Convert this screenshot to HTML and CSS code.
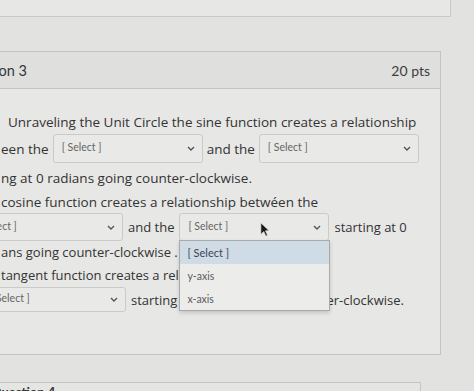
FILE: index.html
```html
<!DOCTYPE html>
<html lang="en">
<head>
<meta charset="utf-8">
<title>Quiz question 3</title>
<link rel="stylesheet" href="styles.css">
</head>
<body>
<div class="page">
  <div class="card card-prev"></div>

  <section class="card card-q3">
    <header class="q-header">
      <span class="q-title">Question 3</span>
      <span class="q-pts">20 pts</span>
    </header>
    <div class="q-body">
      <div class="line l1">Unraveling the Unit Circle the sine function creates a relationship</div>
      <div class="line line-sel l2">
        <span>een the</span>
        <span class="sel sel-a"><span class="sel-text">[ Select ]</span><svg class="chev" viewBox="0 0 8 5"><polyline points="1,1 4,4 7,1"/></svg></span>
        <span>and the</span>
        <span class="sel sel-b"><span class="sel-text">[ Select ]</span><svg class="chev" viewBox="0 0 8 5"><polyline points="1,1 4,4 7,1"/></svg></span>
      </div>
      <div class="line l3">ng at 0 radians going counter-clockwise.</div>
      <div class="line l4">cosine function creates a relationship betwéen the</div>
      <div class="line line-sel lower l5">
        <span class="sel sel-c"><span class="sel-text">[ Select ]</span><svg class="chev" viewBox="0 0 8 5"><polyline points="1,1 4,4 7,1"/></svg></span>
        <span>and the</span>
        <span class="sel sel-d"><span class="sel-text">[ Select ]</span><svg class="chev" viewBox="0 0 8 5"><polyline points="1,1 4,4 7,1"/></svg>
          <ul class="menu">
            <li class="opt opt-active">[ Select ]</li>
            <li class="opt">y-axis</li>
            <li class="opt">x-axis</li>
          </ul>
          <svg class="cursor" viewBox="0 0 12 18"><path d="M1 1 L1 15 L4.5 11.5 L7 17 L9 16 L6.6 10.6 L11 10.6 Z"/></svg>
        </span>
        <span>starting at 0</span>
      </div>
      <div class="line lower l6">ans going counter-clockwise .</div>
      <div class="line lower l7">tangent function creates a relationship between the</div>
      <div class="line line-sel lower l8">
        <span class="sel sel-e"><span class="sel-text">[ Select ]</span><svg class="chev" viewBox="0 0 8 5"><polyline points="1,1 4,4 7,1"/></svg></span>
        <span>starting at 0 radians going counter-clockwise.</span>
      </div>
    </div>
  </section>

  <section class="card card-q4">
    <header class="q-header q4-header">
      <span class="q-title q4-title">Question 4</span>
    </header>
  </section>
</div>
</body>
</html>
```

FILE: styles.css
```css
html, body {
  margin: 0;
  padding: 0;
}
body {
  background: #e2e2e0;
  font-family: "Open Sans", "Liberation Sans", sans-serif;
  color: #333;
  overflow: hidden;
  width: 474px;
  height: 391px;
}
.page {
  display: flex;
  flex-direction: column;
  margin-left: -50px;
}
.card {
  background: #e7e7e5;
  border: 1px solid #c4c4c2;
}
.card-prev {
  width: 501px;
  height: 18px;
  margin-top: -1px;
  box-sizing: border-box;
  border-color: #c9c9c7;
}
.card-q3 {
  margin-top: 34px;
  width: 491px;
  box-sizing: border-box;
}
.q-header {
  height: 37px;
  box-sizing: border-box;
  background: #dfdfdd;
  border-bottom: 1px solid #c4c4c2;
  display: flex;
  align-items: center;
  justify-content: space-between;
  padding: 0 10px 0 5px;
  font-family: Lato, "Open Sans", sans-serif;
  font-size: 14.5px;
  color: #363636;
}
.q-pts {
  color: #3d3d3d;
  font-size: 14px;
}
.q-body {
  padding: 22px 0 42px 50px;
  font-size: 13.5px;
}
.line {
  height: 24px;
  display: flex;
  align-items: center;
  gap: 4px;
  white-space: nowrap;
}
.lower {
  font-size: 13px;
  gap: 5px;
}
.l1 { height: 22px; padding-left: 7px; }
.l2 { height: 29px; margin: 1px 0 2px; }
.l3 { height: 25px; }
.l4 { height: 23px; }
.l5 { height: 28px; }
.l6 { height: 22px; }
.l7 { height: 24px; }
.l8 { height: 25px; }

.sel {
  position: relative;
  height: 100%;
  box-sizing: border-box;
  border: 1px solid #cacac8;
  border-radius: 3px;
  background: #e9e9e7;
  display: flex;
  align-items: center;
  justify-content: space-between;
  padding: 0 7px 3px 8px;
  flex-shrink: 0;
}
.sel-text {
  font-family: Lato, "Open Sans", sans-serif;
  font-size: 10.5px;
  color: #666;
}
.chev {
  width: 8px;
  height: 5px;
  fill: none;
  stroke: #555;
  stroke-width: 1.4;
  margin-top: 3px;
}
.sel-a { width: 150px; }
.sel-b { width: 160px; }
.sel-c { width: 155px; margin-left: -33px; }
.sel-d { width: 150px; }
.sel-e { width: 145px; margin-left: -20px; }

.menu {
  position: absolute;
  top: 100%;
  left: -1px;
  width: 149px;
  margin: 0;
  padding: 0;
  list-style: none;
  background: #ececea;
  border: 1px solid #a9a9a9;
  box-shadow: 0 2px 4px rgba(0, 0, 0, 0.15);
  z-index: 2;
}
.opt {
  height: 23px;
  display: flex;
  align-items: center;
  padding-left: 7px;
  font-family: Lato, "Open Sans", sans-serif;
  font-size: 10.5px;
  color: #5a5a5a;
}
.opt-active {
  background: #cfdbe5;
  color: #3a4652;
  font-size: 11px;
}
.cursor {
  position: absolute;
  left: 80px;
  top: 8px;
  width: 10px;
  height: 15px;
  fill: #1a1a1a;
  stroke: #f0f0f0;
  stroke-width: 0.8;
  z-index: 3;
}
.card-q4 {
  margin-top: 27px;
  margin-left: 40px;
  width: 431px;
  box-sizing: border-box;
}
.q4-header {
  align-items: flex-start;
  padding: 1px 10px 0 0;
  background: #e5e5e3;
  border-bottom: none;
}
.q4-title {
  font-weight: 700;
  font-size: 13px;
}
```
